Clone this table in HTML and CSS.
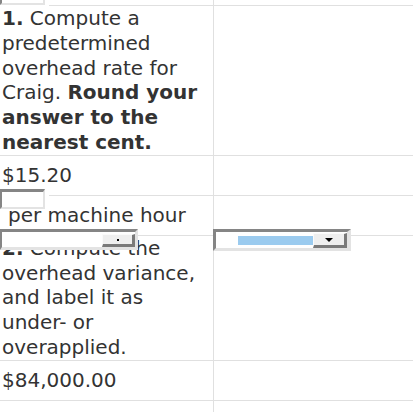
FILE: index.html
```html
<!DOCTYPE html>
<html>
<head>
<meta charset="utf-8">
<link rel="stylesheet" href="styles.css">
</head>
<body>
<div class="page">
  <div class="row row0"><div class="cell left"></div><div class="cell"></div></div>
  <div class="row"><div class="cell left"><b>1.</b> Compute a predetermined overhead rate for Craig. <b>Round your answer to the nearest cent.</b></div><div class="cell"></div></div>
  <div class="row single"><div class="cell left">$15.20</div><div class="cell"></div></div>
  <div class="row single"><div class="cell left unit">per machine hour</div><div class="cell"></div></div>
  <div class="row"><div class="cell left"><b>2.</b> Compute the overhead variance, and label it as under- or overapplied.</div><div class="cell"></div></div>
  <div class="row single"><div class="cell left">$84,000.00</div><div class="cell"></div></div>
  <div class="row single"><div class="cell left"></div><div class="cell"></div></div>

  <div class="field field-top"><input class="box" type="text" aria-label="previous answer"></div>
  <div class="field field-rate"><input class="box" type="text" aria-label="rate"></div>
  <div class="sel sel-unit"><span class="btn"><span class="dot"></span></span></div>
  <div class="sel sel-label"><span class="hl"></span><span class="btn"><span class="arrow"></span></span></div>
</div>
</body>
</html>
```

FILE: styles.css
```css
html, body {
  margin: 0;
  padding: 0;
  background: #fff;
}

.page {
  position: relative;
  width: 413px;
  font-family: "DejaVu Sans", Verdana, sans-serif;
  font-size: 20px;
  line-height: 24.8px;
  color: #333;
}

.row {
  display: grid;
  grid-template-columns: 214px 1fr;
  border-bottom: 1px solid #e0e0e0;
}

.row0 {
  height: 5px;
}

.cell {
  min-width: 0;
}

.left {
  border-right: 1px solid #e0e0e0;
  padding-left: 2px;
}

.single .left {
  min-height: 39px;
  display: flex;
  align-items: center;
}

.unit {
  padding-left: 8px;
}

b {
  font-weight: bold;
}

.field {
  position: absolute;
  left: 0;
  width: 49px;
  background: #fff;
}

.field-top {
  top: -15px;
  height: 21px;
}

.field-rate {
  top: 189px;
  height: 20px;
}

.box {
  display: block;
  box-sizing: border-box;
  margin: 0;
  padding: 0;
  width: 45px;
  height: 20px;
  background: #fff;
  border-style: solid;
  border-width: 3px 2px 2px 2px;
  border-color: #858585 #e3e3e3 #e3e3e3 #858585;
  outline: none;
}

.sel {
  position: absolute;
  box-sizing: border-box;
  background: #fff;
  border-style: solid;
  border-width: 3px 3px 3px 2px;
  border-color: #858585 #e3e3e3 #e3e3e3 #858585;
  display: flex;
  align-items: flex-end;
  justify-content: flex-end;
}

.sel-unit {
  left: 0;
  top: 229px;
  width: 138px;
  height: 21px;
}

.sel-label {
  left: 213px;
  top: 229px;
  width: 138px;
  height: 22px;
  border-left-width: 3px;
  border-right-width: 4px;
}

.btn {
  box-sizing: border-box;
  width: 33px;
  height: 13px;
  background: #efefef;
  border-style: solid;
  border-width: 1px 3px 3px 1px;
  border-color: #fbfbfb #7a7a7a #7a7a7a #fbfbfb;
  display: flex;
  align-items: center;
  justify-content: center;
}

.sel-label .btn {
  width: 34px;
  height: 15px;
}

.dot {
  width: 2px;
  height: 2px;
  background: #000;
}

.arrow {
  width: 0;
  height: 0;
  border-left: 4px solid transparent;
  border-right: 4px solid transparent;
  border-top: 4px solid #000;
}

.hl {
  position: absolute;
  left: 22px;
  top: 4px;
  width: 75px;
  height: 9px;
  background: #9bcbef;
}
```
